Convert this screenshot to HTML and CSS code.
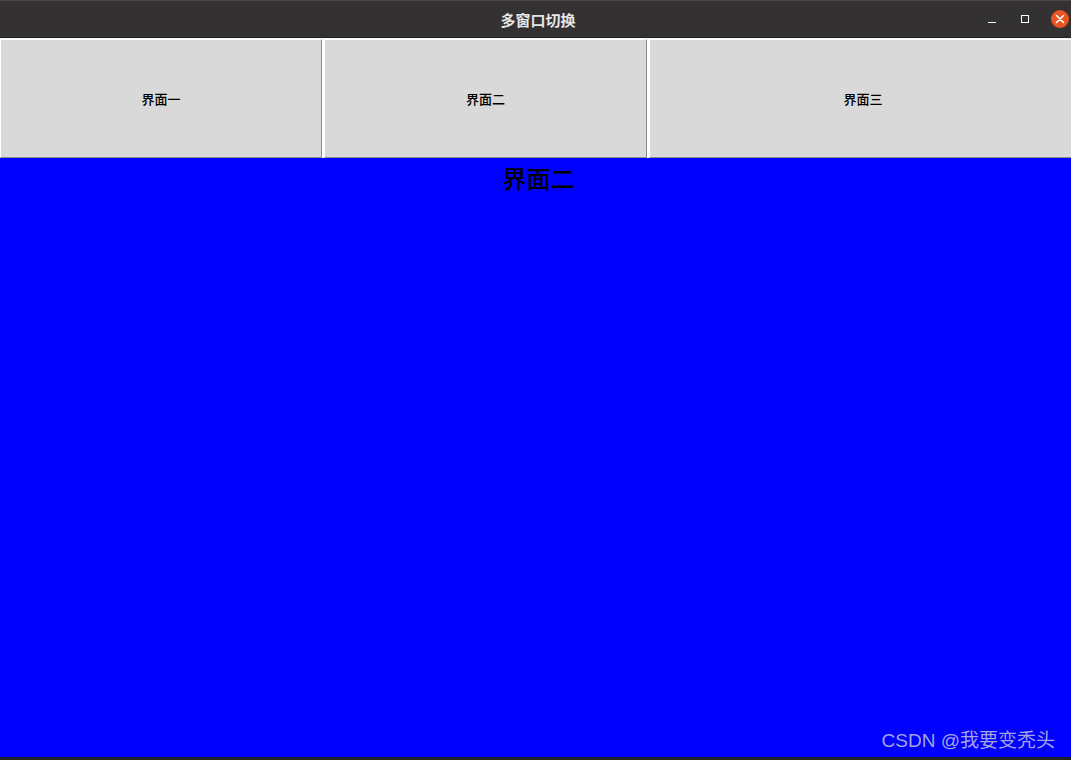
FILE: index.html
```html
<!DOCTYPE html>
<html lang="zh">
<head>
    <meta charset="UTF-8">
    <title>多窗口切换</title>
    <link rel="stylesheet" href="styles.css">
</head>
<body>
    <div class="window">
        <div class="titlebar">
            <div class="title">多窗口切换</div>
            <div class="controls">
                <span class="ctl-min"></span>
                <span class="ctl-max"></span>
                <span class="ctl-close">
                    <svg width="12" height="12" viewBox="0 0 12 12">
                        <path d="M2.5 2.5 L9.5 9.5 M9.5 2.5 L2.5 9.5" stroke="#fff" stroke-width="1.6" stroke-linecap="round"/>
                    </svg>
                </span>
            </div>
        </div>
        <div class="tabs">
            <button class="tab tab-one">界面一</button>
            <button class="tab tab-two">界面二</button>
            <button class="tab tab-three">界面三</button>
        </div>
        <div class="panel">
            <div class="panel-label">界面二</div>
            <div class="watermark">CSDN @我要变秃头</div>
        </div>
        <div class="bottom-edge"></div>
    </div>
</body>
</html>
```

FILE: styles.css
```css
body {
    margin: 0;
    padding: 0;
    font-family: 'Noto Sans CJK SC', 'Noto Sans', sans-serif;
    background: #1e1e1e;
    overflow: hidden;
}

.window {
    width: 1071px;
    height: 760px;
    display: flex;
    flex-direction: column;
    overflow: hidden;
}

.titlebar {
    height: 36px;
    background: #333131;
    border-top: 1px solid #4a4848;
    border-bottom: 1px solid #232222;
    display: flex;
    align-items: center;
    justify-content: center;
    position: relative;
}

.title {
    color: #e6e6e6;
    font-size: 15px;
    font-weight: bold;
    margin-left: 5px;
}

.controls {
    position: absolute;
    right: 0;
    top: 0;
    height: 36px;
    display: flex;
    align-items: center;
}

.ctl-min {
    width: 8px;
    height: 1px;
    background: #fff;
    margin-top: 6px;
    margin-right: 25px;
}

.ctl-max {
    width: 6px;
    height: 6px;
    border: 1px solid #fff;
    margin-right: 22px;
}

.ctl-close {
    width: 18px;
    height: 18px;
    border-radius: 50%;
    background: #e95420;
    display: flex;
    align-items: center;
    justify-content: center;
    margin-right: 2px;
}

.tabs {
    display: flex;
    height: 119px;
    background: #fff;
    border-top: 1px solid #f4f4f4;
}

.tab {
    flex: none;
    height: 119px;
    margin: 0 2px 0 0;
    padding: 0;
    background: #d9d9d9;
    border-top: 1px solid #fff;
    border-left: 1px solid #fff;
    border-right: 1px solid #8c8c8c;
    border-bottom: 1px solid #8c8c8c;
    font-family: 'Noto Sans CJK SC', sans-serif;
    font-size: 13px;
    font-weight: 500;
    color: #000;
}

.tab-one {
    width: 322px;
}

.tab-two {
    width: 323px;
}

.tab-three {
    width: 428px;
    margin-right: 0;
}

.panel {
    flex: 1;
    background: #0000ff;
    display: flex;
    flex-direction: column;
    align-items: center;
    position: relative;
}

.panel-label {
    font-size: 24px;
    font-weight: 500;
    color: #000;
    line-height: 32px;
    margin-top: 4px;
    margin-left: 6px;
}

.watermark {
    position: absolute;
    right: 16px;
    bottom: 5px;
    font-family: 'Liberation Sans', 'Noto Sans CJK SC', sans-serif;
    font-size: 19px;
    color: rgba(220, 220, 220, 0.75);
}

.bottom-edge {
    height: 3px;
    background: #222;
}
```
